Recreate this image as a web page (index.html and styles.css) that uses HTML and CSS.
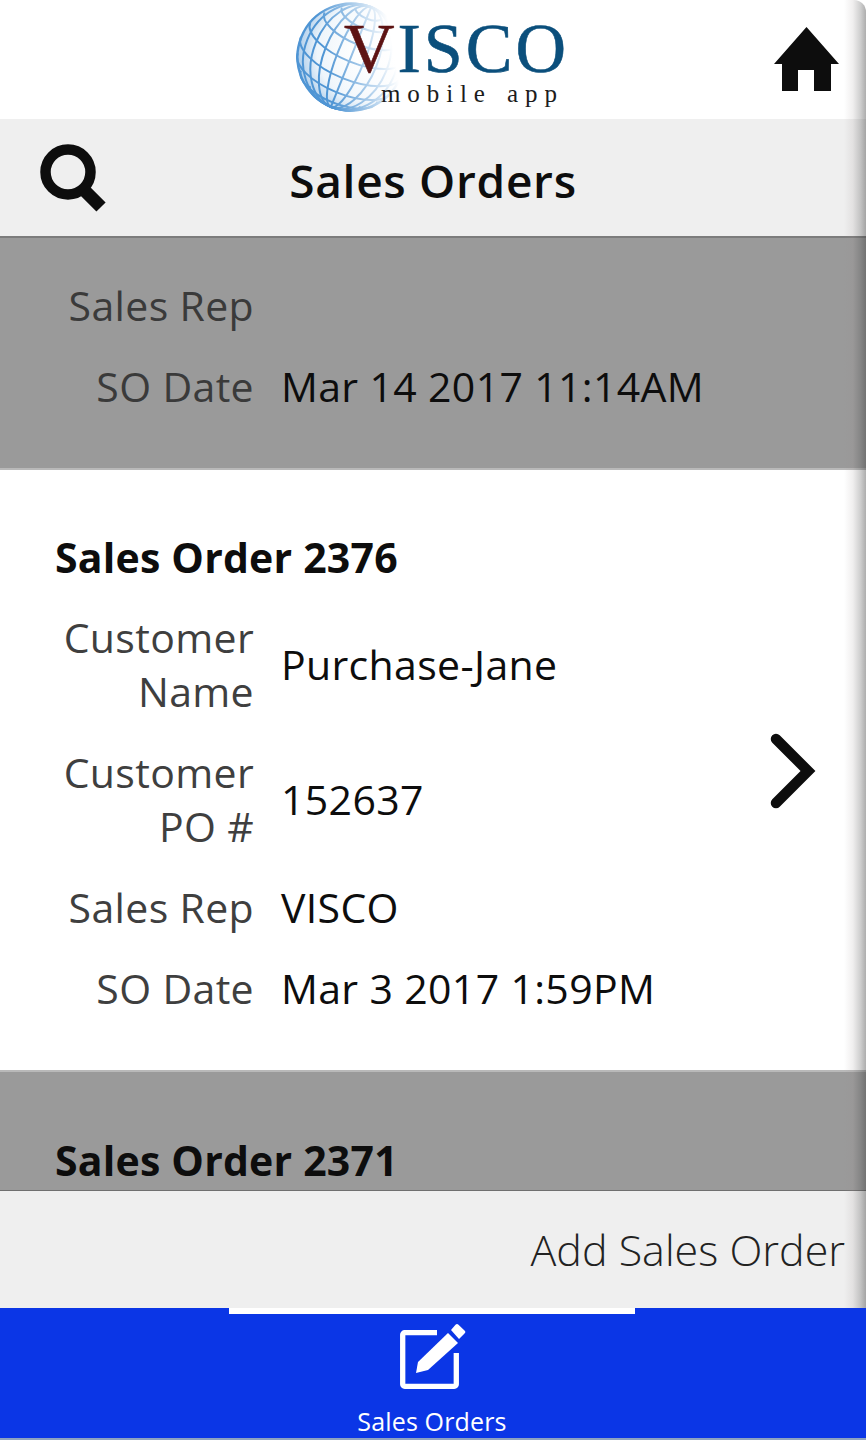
FILE: index.html
```html
<!DOCTYPE html>
<html lang="en">
<head>
<meta charset="utf-8">
<title>Sales Orders</title>
<link rel="stylesheet" href="styles.css">
</head>
<body>
<div class="app">
  <header class="top">
    <div class="logo">
      <svg class="globe" viewBox="0 0 110 112" width="110" height="112" aria-hidden="true">
        <defs>
          <radialGradient id="shade" cx="0.62" cy="0.46" r="0.6">
            <stop offset="0" stop-color="#ffffff"/>
            <stop offset="0.72" stop-color="#eef5fb"/>
            <stop offset="1" stop-color="#b4d1ec"/>
          </radialGradient>
          <linearGradient id="fade" x1="0.1" y1="0.55" x2="0.92" y2="0.4">
            <stop offset="0.2" stop-color="#ffffff" stop-opacity="0"/>
            <stop offset="0.62" stop-color="#ffffff" stop-opacity="0.55"/>
            <stop offset="0.95" stop-color="#ffffff" stop-opacity="1"/>
          </linearGradient>
        </defs>
        <circle cx="55" cy="56" r="54" fill="url(#shade)"/>
        <g transform="translate(55 56) rotate(22)" fill="none" stroke="#4f95d4" stroke-width="2">
          <circle r="53.500" stroke-width="2.400"/>
          <path d="M0-54A14 54 0 0 0 0 54A14 54 0 0 0 0-54"/>
          <path d="M0-54A27 54 0 0 0 0 54A27 54 0 0 0 0-54"/>
          <path d="M0-54A38 54 0 0 0 0 54A38 54 0 0 0 0-54"/>
          <path d="M0-54A47 54 0 0 0 0 54A47 54 0 0 0 0-54"/>
          <path d="M0-54V54"/>
          <path d="M-14-47.300A14 5.900 0 0 0 14-47.300"/>
          <path d="M-27-42.400A27 11.400 0 0 0 27-42.400"/>
          <path d="M-41.400-31.500A41.400 17.500 0 0 0 41.400-31.500"/>
          <path d="M-50.700-16.700A50.700 21.400 0 0 0 50.700-16.700"/>
          <path d="M-54 0A54 22.800 0 0 0 54 0"/>
          <path d="M-50.700 16.700A50.700 21.400 0 0 0 50.700 16.700"/>
          <path d="M-41.400 31.500A41.400 17.500 0 0 0 41.400 31.500"/>
          <path d="M-27 42.400A27 11.400 0 0 0 27 42.400"/>
        </g>
        <rect x="0" y="0" width="110" height="112" fill="url(#fade)"/>
      </svg>
      <div class="wordmark"><span class="v">V</span>ISCO</div>
      <div class="tagline">mobile app</div>
    </div>
    <a class="home" href="#" aria-label="Home">
      <svg viewBox="0 0 65 65" width="65" height="65" aria-hidden="true">
        <path d="M32.500 0 65 37H57V64H40V43H24V64H8V37H0Z" fill="#0d0d0d"/>
      </svg>
    </a>
  </header>

  <div class="titlebar">
    <svg class="search" viewBox="0 0 68 68" width="68" height="68" aria-hidden="true">
      <circle cx="28" cy="28" r="22.500" fill="none" stroke="#0d0d0d" stroke-width="10.500"/>
      <path d="M44 46 61 63" stroke="#0d0d0d" stroke-width="13" fill="none"/>
    </svg>
    <h1>Sales Orders</h1>
  </div>

  <main class="list">
    <section class="order order-muted order-cut">
      <dl class="fields">
        <dt class="single">Sales Rep</dt><dd></dd>
        <dt class="single">SO Date</dt><dd>Mar 14 2017 11:14AM</dd>
      </dl>
    </section>
    <section class="order order-open">
      <h2>Sales Order 2376</h2>
      <dl class="fields">
        <dt>Customer Name</dt><dd>Purchase-Jane</dd>
        <dt>Customer PO #</dt><dd>152637</dd>
        <dt class="single">Sales Rep</dt><dd>VISCO</dd>
        <dt class="single">SO Date</dt><dd>Mar 3 2017 1:59PM</dd>
      </dl>
      <svg class="chevron" viewBox="0 0 46 76" width="46" height="76" aria-hidden="true">
        <path d="M6 6 38 38 6 70" fill="none" stroke="#0d0d0d" stroke-width="10.500" stroke-linecap="round"/>
      </svg>
    </section>
    <section class="order order-muted">
      <h2>Sales Order 2371</h2>
    </section>
  </main>

  <div class="actionbar"><span>Add Sales Order</span></div>

  <nav class="tabbar">
    <a class="tab" href="#">
      <svg viewBox="0 0 68 68" width="68" height="68" aria-hidden="true">
        <path d="M39 10.700H6.700a2 2 0 0 0-2 2V62.300a2 2 0 0 0 2 2H56.300a2 2 0 0 0 2-2V31" fill="none" stroke="#fff" stroke-width="5.300"/>
        <path d="M18 51 20 40 50 11 60 21 30 48Z" fill="#fff"/>
        <path d="M53 8 57.500 2.800a2 2 0 0 1 3 0L66.500 8.500a2 2 0 0 1 0 3L61 17Z" fill="#fff"/>
      </svg>
      <span>Sales Orders</span>
    </a>
  </nav>

  <div class="edge" aria-hidden="true"></div>
</div>
</body>
</html>
```
FILE: styles.css
```css
* { box-sizing: border-box; }
html, body { margin: 0; padding: 0; }
body { background: #fff; font-family: "Open Sans", "Noto Sans", sans-serif; color: #0d0d0d; }
a { color: inherit; text-decoration: none; }

.app {
  position: relative;
  width: 866px;
  height: 1440px;
  overflow: hidden;
  display: flex;
  flex-direction: column;
}

.top {
  height: 119px;
  flex: none;
  background: #fff;
  position: relative;
  display: flex;
  justify-content: center;
}

.logo {
  position: relative;
  width: 272px;
  height: 119px;
  margin-left: -2px;
}
.globe { position: absolute; left: 0; top: 1px; }
.wordmark {
  position: absolute;
  left: 48px;
  top: 19px;
  font-family: "Liberation Serif", serif;
  font-size: 70px;
  line-height: 60px;
  letter-spacing: 3px;
  color: #0b4f7c;
  white-space: nowrap;
  -webkit-text-stroke: 0.6px currentColor;
}
.wordmark .v { color: #5d1313; }
.tagline {
  position: absolute;
  left: 85px;
  top: 80px;
  font-family: "Liberation Serif", serif;
  font-size: 25px;
  line-height: 28px;
  letter-spacing: 6.900px;
  word-spacing: 2px;
  color: #1c1c1c;
  white-space: nowrap;
}

.home { position: absolute; right: 27px; top: 27px; display: block; line-height: 0; }

.titlebar {
  height: 119px;
  flex: none;
  background: #efefef;
  border-bottom: 2px solid #7c7c7c;
  padding-top: 5px;
  position: relative;
  display: flex;
  align-items: center;
  justify-content: center;
}
.titlebar h1 { margin: 0; font-size: 46px; line-height: 60px; font-weight: 600; letter-spacing: 0.700px; }
.search { position: absolute; left: 40px; top: 25px; }

.list { flex: 1; min-height: 0; overflow: hidden; display: flex; flex-direction: column; }

.order { position: relative; padding: 58px 0 0 0; flex: none; }
.order h2 { margin: 0 0 0 55px; font-size: 41px; line-height: 60px; font-weight: 700; letter-spacing: 0.200px; }
.order-muted { background: #9a9a9a; }
.order-cut { height: 230px; padding-top: 40px; }
.order-open { height: 604px; background: #fff; border-top: 2px solid #b9b9b9; border-bottom: 2px solid #b9b9b9; padding-top: 57px; }
.order-muted:last-child { flex: 1; padding-top: 58px; }

.fields {
  margin: 23px 0 0;
  display: grid;
  grid-template-columns: 254px 1fr;
  column-gap: 27px;
  row-gap: 27px;
  align-items: center;
  font-size: 41px;
  line-height: 54px;
  letter-spacing: 0.350px;
}
.order-cut .fields { margin: 0; }
.fields dt { text-align: right; color: #3f3f3f; padding-left: 60px; }
.fields dt.single { padding-left: 0; }
.order-muted .fields dt { color: #3a3a3a; }
.fields dd { margin: 0; color: #0d0d0d; min-height: 54px; }
.chevron { position: absolute; left: 770px; top: 263px; }

.actionbar {
  height: 118px;
  flex: none;
  background: #efefef;
  border-top: 1px solid #6f6f6f;
  display: flex;
  align-items: center;
  justify-content: flex-end;
  padding-right: 21px;
  font-size: 43px;
  font-weight: 300;
  color: #222;
}

.tabbar {
  height: 132px;
  flex: none;
  background: #0b36e6;
  display: flex;
  justify-content: center;
  border-bottom: 2px solid #8fa3c0;
}
.tab {
  width: 406px;
  margin-right: 2px;
  border-top: 6px solid #fff;
  display: flex;
  flex-direction: column;
  align-items: center;
  color: #fff;
  font-size: 25px;
  line-height: 32px;
  padding-top: 8px;
}
.tab svg { display: block; }
.tab span { margin-top: 15px; letter-spacing: 0.150px; }

.edge {
  position: absolute;
  right: 0;
  top: 0;
  bottom: 132px;
  width: 22px;
  border-top-right-radius: 12px;
  background: linear-gradient(90deg, rgba(200,200,210,0) 0, rgba(150,140,140,0.14) 40%, rgba(80,80,80,0.28) 75%, rgba(60,60,60,0.42) 100%);
  pointer-events: none;
}
```
